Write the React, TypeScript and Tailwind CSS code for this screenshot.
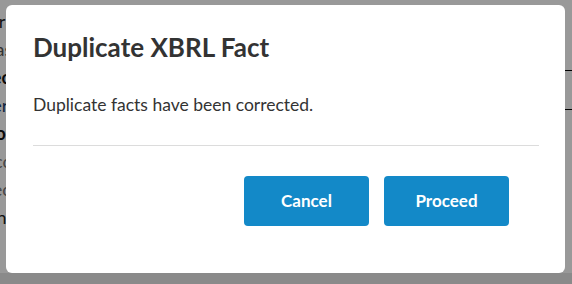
import React from "react";

const bgLines = [
  { t: "Err", c: "text-[#222]" },
  { t: "Has", c: "text-[#555]" },
  { t: "Sec", c: "text-[#111] font-bold" },
  { t: "Per", c: "text-[#1a3a6a]" },
  { t: "Doo", c: "text-[#111] font-bold" },
  { t: "Acc", c: "text-[#777]" },
  { t: "Rec", c: "text-[#777]" },
  { t: "Fin", c: "text-[#222]" },
];

export default function App() {
  return (
    <div className="relative w-[572px] h-[284px] overflow-hidden bg-white font-['Lato',sans-serif]">
      {/* page behind the modal */}
      <div className="flex h-full flex-col">
        <div className="flex flex-1">
          <div className="ml-[-18px] flex flex-col gap-[6px] pt-[10px] text-[18px] leading-[22px]">
            {bgLines.map((l) => (
              <div key={l.t} className={l.c}>
                {l.t}
              </div>
            ))}
          </div>
          <div className="ml-auto flex w-[20px] flex-col pt-[70px]">
            <div className="h-[40px] border-y border-black" />
          </div>
        </div>
        <div className="h-[11px] bg-[#e6e6e6]" />
      </div>

      {/* overlay */}
      <div className="absolute inset-0 bg-black/40 pt-[5px] pl-[6px]">
        <div className="w-[559px] h-[268px] rounded-[6px] bg-white pl-[27px] pr-[26px] pt-[26px] text-[#333]">
          <h2 className="text-[26px] leading-[32px] font-bold">Duplicate XBRL Fact</h2>
          <p className="mt-[31px] text-[17.5px] leading-[22px]">Duplicate facts have been corrected.</p>
          <div className="mt-[29px] border-t border-[#dcdcdc]" />
          <div className="mt-[30px] flex justify-end gap-[15px] pr-[30px]">
            <button className="w-[125px] h-[50px] rounded-[4px] bg-[#1389c8] text-white text-[17px] font-bold">
              Cancel
            </button>
            <button className="w-[125px] h-[50px] rounded-[4px] bg-[#1389c8] text-white text-[17px] font-bold">
              Proceed
            </button>
          </div>
        </div>
      </div>
    </div>
  );
}
